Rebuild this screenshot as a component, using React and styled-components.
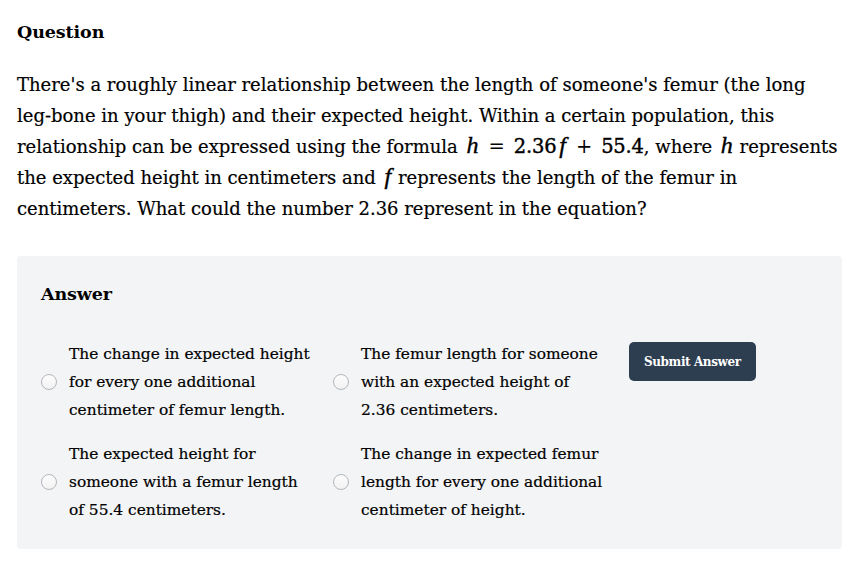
import React from "react"
import styled, { createGlobalStyle } from "styled-components"

const GlobalStyle = createGlobalStyle`
    body {
        margin: 0;
        background: #fff;
        color: #000;
        font-family: "DejaVu Serif", Georgia, serif;
    }
`

const options = [
    ["The change in expected height", "for every one additional", "centimeter of femur length."],
    ["The femur length for someone", "with an expected height of", "2.36 centimeters."],
    ["The expected height for", "someone with a femur length", "of 55.4 centimeters."],
    ["The change in expected femur", "length for every one additional", "centimeter of height."],
]

export default function App() {
    return (
        <React.Fragment>
            <GlobalStyle />
            <Page>
                <Heading>Question</Heading>
                <Prompt>
                    There's a roughly linear relationship between the length of someone's femur (the long<br />
                    leg-bone in your thigh) and their expected height. Within a certain population, this<br />
                    relationship can be expressed using the formula <Math><Var>h</Var><Op>=</Op>2.36<Var>f</Var><Op>+</Op>55.4</Math>, where <Math><Var>h</Var></Math> represents<br />
                    the expected height in centimeters and <Math><Var>f</Var></Math> represents the length of the femur in<br />
                    centimeters. What could the number 2.36 represent in the equation?
                </Prompt>
                <AnswerBox>
                    <Heading>Answer</Heading>
                    <AnswerRow>
                        <Choices>
                            {options.map((lines, i) => (
                                <Choice key={i}>
                                    <Radio type="radio" name="answer" />
                                    <ChoiceText>
                                        {lines.map((l, j) => <div key={j}>{l}</div>)}
                                    </ChoiceText>
                                </Choice>
                            ))}
                        </Choices>
                        <SubmitButton>Submit Answer</SubmitButton>
                    </AnswerRow>
                </AnswerBox>
            </Page>
        </React.Fragment>
    )
}

const Page = styled.div`
    padding: 21px 17px 17px 17px;
    width: 825px;
`

const Heading = styled.div`
    font-weight: bold;
    font-size: 17.5px;
    line-height: 22px;
    letter-spacing: -0.1px;
`

const Prompt = styled.p`
    margin: 26px 0 0 0;
    font-size: 18px;
    line-height: 31px;
    white-space: nowrap;
    -webkit-text-stroke: 0.2px #000;
`

const Math = styled.span`
    font-family: "DejaVu Serif", serif;
    font-size: 19.5px;
    line-height: 0;
    letter-spacing: -0.2px;
    -webkit-text-stroke: 0.4px #000;
`

const Var = styled.i`
    font-family: "Liberation Serif", "Times New Roman", serif;
    font-style: italic;
    font-size: 24px;
    letter-spacing: 0;
    padding: 0 1px 0 3px;
`

const Op = styled.span`
    padding: 0 9px;
    -webkit-text-stroke: 0;
`

const AnswerBox = styled.div`
    margin-top: 32px;
    background: #f3f4f6;
    border-radius: 4px;
    padding: 27px 24px 25px 24px;
`

const AnswerRow = styled.div`
    display: flex;
    align-items: flex-start;
    margin-top: 35px;
`

const Choices = styled.div`
    display: grid;
    grid-template-columns: 292px 296px;
    row-gap: 16px;
`

const Choice = styled.label`
    display: flex;
    align-items: center;
    gap: 12px;
`

const Radio = styled.input`
    appearance: none;
    margin: 0;
    width: 16px;
    height: 16px;
    border-radius: 50%;
    border: 1px solid #b4b6ba;
    background: linear-gradient(#fdfdfd, #f2f2f2);
    flex-shrink: 0;
`

const ChoiceText = styled.div`
    font-size: 15.4px;
    line-height: 28px;
    white-space: nowrap;
    -webkit-text-stroke: 0.2px #000;
`

const SubmitButton = styled.button`
    margin-top: 2px;
    height: 39px;
    padding: 0 15px;
    background: #2d3e50;
    color: #fff;
    border: none;
    border-radius: 5px;
    font-family: "DejaVu Serif", Georgia, serif;
    font-weight: bold;
    font-size: 12px;
    letter-spacing: -0.4px;
`
